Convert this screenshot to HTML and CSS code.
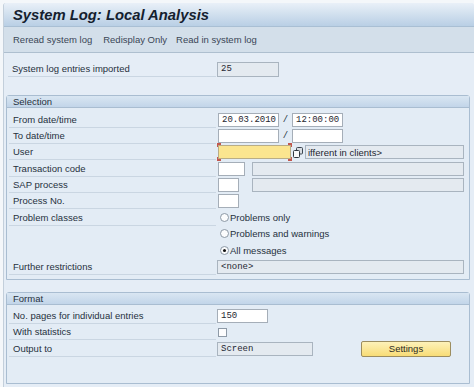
FILE: index.html
```html
<!DOCTYPE html>
<html lang="en">
<head>
<meta charset="utf-8">
<title>System Log: Local Analysis</title>
<link rel="stylesheet" href="styles.css">
</head>
<body>
<div class="window">
  <div class="titlebar"><h1>System Log: Local Analysis</h1></div>
  <div class="toolbar">
    <span class="tb-item">Reread system log</span>
    <span class="tb-item">Redisplay Only</span>
    <span class="tb-item">Read in system log</span>
  </div>
  <div class="content">
    <div class="row top-row">
      <span class="lbl">System log entries imported</span>
      <span class="f disp w-count">25</span>
    </div>

    <section class="group sel">
      <div class="ghead">Selection</div>
      <div class="gbody">
        <div class="row">
          <span class="lbl">From date/time</span>
          <span class="f w-date">20.03.2010</span>
          <span class="slash">/</span>
          <span class="f w-time">12:00:00</span>
        </div>
        <div class="row">
          <span class="lbl">To date/time</span>
          <span class="f w-date"></span>
          <span class="slash">/</span>
          <span class="f w-time"></span>
        </div>
        <div class="row">
          <span class="lbl">User</span>
          <span class="focus"><span class="f yellow"></span></span>
          <svg class="multi" width="10" height="11" viewBox="0 0 10 11" aria-hidden="true">
            <rect x="3.5" y="0.5" width="6" height="6.5" rx="1" fill="#d9dee3" stroke="#3c4650"/>
            <rect x="0.5" y="3.5" width="6" height="7" rx="1" fill="#f7f8f9" stroke="#2e3740"/>
          </svg>
          <span class="f disp grow sans">ifferent in clients&gt;</span>
        </div>
        <div class="row">
          <span class="lbl">Transaction code</span>
          <span class="f w-tcode"></span>
          <span class="f disp grow gap-l"></span>
        </div>
        <div class="row">
          <span class="lbl">SAP process</span>
          <span class="f w-proc"></span>
          <span class="f disp grow gap-l2"></span>
        </div>
        <div class="row">
          <span class="lbl">Process No.</span>
          <span class="f w-proc"></span>
        </div>
        <div class="row">
          <span class="lbl">Problem classes</span>
          <span class="radio"><span class="dot"></span>Problems only</span>
        </div>
        <div class="row">
          <span class="lbl empty"></span>
          <span class="radio"><span class="dot"></span>Problems and warnings</span>
        </div>
        <div class="row">
          <span class="lbl empty"></span>
          <span class="radio"><span class="dot on"></span>All messages</span>
        </div>
        <div class="row">
          <span class="lbl">Further restrictions</span>
          <span class="f disp grow wide">&lt;none&gt;</span>
        </div>
      </div>
    </section>

    <section class="group fmt">
      <div class="ghead">Format</div>
      <div class="gbody">
        <div class="row">
          <span class="lbl">No. pages for individual entries</span>
          <span class="f w-pages">150</span>
        </div>
        <div class="row">
          <span class="lbl">With statistics</span>
          <span class="check"></span>
        </div>
        <div class="row">
          <span class="lbl">Output to</span>
          <span class="f disp w-out">Screen</span>
          <button class="btn" type="button">Settings</button>
        </div>
      </div>
    </section>
  </div>
</div>
</body>
</html>
```

FILE: styles.css
```css
* { box-sizing: border-box; }

html, body { height: 100%; }

body {
  margin: 0;
  background: #f4f7fa;
  font-family: "Liberation Sans", Arial, sans-serif;
  font-size: 9.5px;
  color: #26313d;
  overflow: hidden;
}

.window {
  margin: 3px 0 0 3px;
  height: 384px;
  background: #e5edf6;
  border-left: 1px solid #c3cfdb;
  border-top-left-radius: 3px;
  border-top-right-radius: 3px;
  overflow: hidden;
}

.titlebar {
  height: 24px;
  background: linear-gradient(#e9f0f8, #d3e1ef 45%, #b9cfe5);
  border-bottom: 1px solid #a9bfd4;
  display: flex;
  align-items: center;
  padding-left: 9px;
}

.titlebar h1 {
  margin: 0;
  font-family: "Liberation Sans", Arial, sans-serif;
  font-style: italic;
  font-weight: bold;
  font-size: 14.8px;
  color: #14202e;
}

.toolbar {
  height: 26px;
  background: #d3dfea;
  border-bottom: 1px solid #aebfcf;
  display: flex;
  align-items: center;
  gap: 11px;
  padding-left: 9px;
  color: #3a4656;
}

.tb-item:last-child { margin-left: -2px; }

.content {
  padding: 8px 0 0 1px;
}

.row {
  display: flex;
  align-items: center;
  height: 16.33px;
}

.lbl {
  width: 207px;
  margin-left: 2px;
  margin-right: 1px;
  padding-left: 4px;
  align-self: stretch;
  display: flex;
  align-items: center;
  border-bottom: 1px solid #cad6e2;
  white-space: nowrap;
}

.lbl.empty { border-bottom: none; }

.top-row { height: 16px; }
.top-row .lbl { margin-left: 3px; width: 208px; margin-right: 1px; }

.f {
  height: 14px;
  border: 1px solid #a5aeb8;
  background: #ffffff;
  font-family: "Liberation Mono", "Courier New", monospace;
  font-size: 9px;
  color: #1e2630;
  padding-left: 3px;
  display: flex;
  align-items: center;
  white-space: nowrap;
  overflow: hidden;
}

.f.disp {
  background: #e4eaf0;
  border-color: #a9b4bf;
}

.f.sans {
  font-family: "Liberation Sans", Arial, sans-serif;
  font-size: 9.5px;
  padding-left: 2px;
}

.w-count { width: 62px; height: 15px; }
.w-date { width: 61px; margin-left: 1px; }
.w-time { width: 51px; }
.w-tcode { width: 27px; margin-left: 1px; }
.w-proc { width: 21px; margin-left: 1px; }
.w-pages { width: 51px; }
.w-out { width: 96px; }

.slash {
  width: 13px;
  text-align: center;
  font-family: "Liberation Mono", monospace;
  font-size: 9px;
}

.grow { flex: 1; }
.gap-l { margin-left: 7px; }
.gap-l2 { margin-left: 13px; }

.focus {
  width: 75px;
  height: 18px;
  padding: 2px 1px;
  background:
    linear-gradient(#c2574e, #c2574e) left top / 4px 2px no-repeat,
    linear-gradient(#c2574e, #c2574e) left top / 2px 4px no-repeat,
    linear-gradient(#c2574e, #c2574e) right top / 4px 2px no-repeat,
    linear-gradient(#c2574e, #c2574e) right top / 2px 4px no-repeat,
    linear-gradient(#c2574e, #c2574e) left bottom / 4px 2px no-repeat,
    linear-gradient(#c2574e, #c2574e) left bottom / 2px 4px no-repeat,
    linear-gradient(#c2574e, #c2574e) right bottom / 4px 2px no-repeat,
    linear-gradient(#c2574e, #c2574e) right bottom / 2px 4px no-repeat;
}

.f.yellow {
  width: 100%;
  height: 14px;
  background: #fbe58f;
  border-color: #b9ad86;
}

.multi {
  margin: 0 2px 0 1px;
  flex: none;
}

.radio {
  display: flex;
  align-items: center;
  margin-left: 3px;
  gap: 1px;
  white-space: nowrap;
}

.dot {
  width: 9px;
  height: 9px;
  border-radius: 50%;
  border: 1px solid #8b98a5;
  background: #fbfcfd;
  display: flex;
  align-items: center;
  justify-content: center;
}

.dot.on::after {
  content: "";
  width: 3px;
  height: 3px;
  border-radius: 50%;
  background: #111;
}

.check {
  width: 9px;
  height: 9px;
  margin-left: 1px;
  border: 1px solid #8e9aa7;
  background: #fdfdfe;
}

.group {
  margin-left: 1px;
  width: 464px;
  border: 1px solid #a9bdd1;
  border-radius: 3px 3px 0 0;
  background: #e3ecf5;
}

.ghead {
  height: 12px;
  background: linear-gradient(#d9e6f2, #c2d5e9);
  border-bottom: 1px solid #a9bdd1;
  padding-left: 6px;
  display: flex;
  align-items: center;
  color: #26313d;
}

.sel { margin-top: 18px; }
.sel .gbody { padding: 3.5px 5px 4px 0; }

.fmt { margin-top: 12px; }
.fmt .gbody { padding: 2.5px 5px 26px 0; }
.fmt .row { height: 16.5px; }

.btn {
  margin-left: 48px;
  width: 90px;
  height: 16px;
  padding: 0;
  border: 1px solid #9c8d5f;
  border-radius: 2px;
  background: linear-gradient(#fdf1b9, #f8dc76);
  font-family: "Liberation Sans", Arial, sans-serif;
  font-size: 9.5px;
  color: #2a2a24;
}
```
